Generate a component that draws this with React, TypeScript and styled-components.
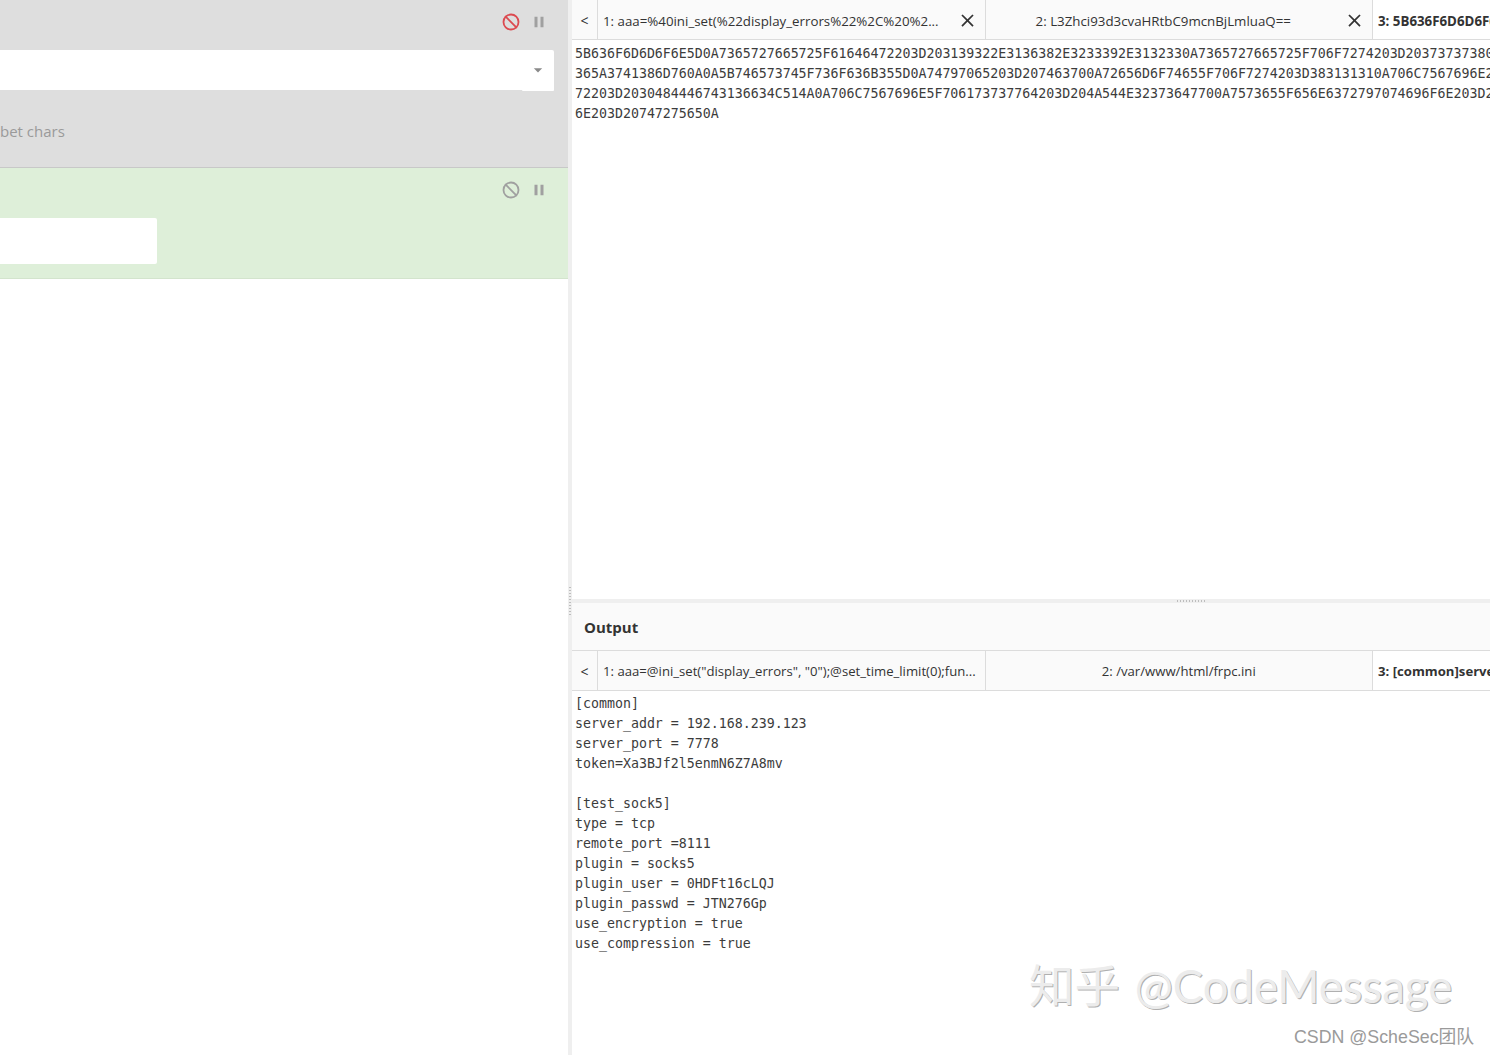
import React from "react";
import styled, { createGlobalStyle } from "styled-components";
import { Ban } from "lucide-react";
import { MdClose, MdPause, MdArrowDropDown } from "react-icons/md";

const outputText = `[common]
server_addr = 192.168.239.123
server_port = 7778
token=Xa3BJf2l5enmN6Z7A8mv

[test_sock5]
type = tcp
remote_port =8111
plugin = socks5
plugin_user = 0HDFt16cLQJ
plugin_passwd = JTN276Gp
use_encryption = true
use_compression = true
`;

const toHex = (text: string) =>
  Array.from(text)
    .map((c) => c.charCodeAt(0).toString(16).toUpperCase().padStart(2, "0"))
    .join("");

const hexLines = toHex(outputText).match(/.{1,154}/g)!.join("\n");

const App = () => {
  return (
    <>
      <GlobalStyle />
      <Page>
        <RecipePanel>
          <Operation $tone="disabled">
            <OperationControls>
              <ControlIcon $active><Ban size={18} strokeWidth={2.4} /></ControlIcon>
              <ControlIcon><MdPause /></ControlIcon>
            </OperationControls>
            <SelectField>
              <MdArrowDropDown />
            </SelectField>
            <CheckboxLabel>bet chars</CheckboxLabel>
          </Operation>
          <Operation $tone="flow">
            <OperationControls>
              <ControlIcon><Ban size={18} strokeWidth={2.4} /></ControlIcon>
              <ControlIcon><MdPause /></ControlIcon>
            </OperationControls>
            <TextField />
          </Operation>
        </RecipePanel>
        <VerticalGutter />
        <IoPanel>
          <InputArea>
            <InputTabBar>
              <TabArrow>&lt;</TabArrow>
              <Tab>
                <TabTitle>1: aaa=%40ini_set(%22display_errors%22%2C%20%2...</TabTitle>
                <CloseButton><MdClose /></CloseButton>
              </Tab>
              <Tab>
                <TabTitle $centered>2: L3Zhci93d3cvaHRtbC9mcnBjLmluaQ==</TabTitle>
                <CloseButton><MdClose /></CloseButton>
              </Tab>
              <Tab $active>
                <TabTitle>3: 5B636F6D6D6F6E5D0A7365727665725F61646472...</TabTitle>
              </Tab>
            </InputTabBar>
            <InputText>{hexLines}</InputText>
          </InputArea>
          <HorizontalGutter />
          <OutputHeader>Output</OutputHeader>
          <TabBar>
            <TabArrow>&lt;</TabArrow>
            <Tab>
              <TabTitle>1: aaa=@ini_set("display_errors", "0");@set_time_limit(0);fun...</TabTitle>
            </Tab>
            <Tab>
              <TabTitle $centered>2: /var/www/html/frpc.ini</TabTitle>
            </Tab>
            <Tab $active>
              <TabTitle>3: [common]server_addr = 192.168.239.123...</TabTitle>
            </Tab>
          </TabBar>
          <CodeText>{outputText}</CodeText>
        </IoPanel>
        <Watermark>知乎 @CodeMessage</Watermark>
        <SourceMark>CSDN @ScheSec团队</SourceMark>
      </Page>
    </>
  );
};

export default App;

const GlobalStyle = createGlobalStyle`
  html, body {
    margin: 0;
    overflow: hidden;
    background: #fff;
  }
`;

const Page = styled.div`
  position: relative;
  display: flex;
  width: 1490px;
  height: 1055px;
  overflow: hidden;
  font-family: "Open Sans", "Liberation Sans", sans-serif;
  color: #333;
`;

const RecipePanel = styled.div`
  width: 568px;
  flex: none;
  background: #fff;
`;

const Operation = styled.div<{ $tone: "disabled" | "flow" }>`
  position: relative;
  box-sizing: border-box;
  height: ${(props) => (props.$tone === "disabled" ? "168px" : "111px")};
  padding-top: 50px;
  background: ${(props) => (props.$tone === "disabled" ? "#dedede" : "#deefd9")};
  border-bottom: 1px solid ${(props) => (props.$tone === "disabled" ? "#c8c8c8" : "#d3e4cd")};
`;

const OperationControls = styled.div`
  position: absolute;
  top: 13px;
  right: 20px;
  display: flex;
  align-items: center;
  gap: 10px;
  height: 18px;
`;

const ControlIcon = styled.span<{ $active?: boolean }>`
  display: flex;
  font-size: 18px;
  color: ${(props) => (props.$active ? "#dc4a50" : "#a0a0a0")};
`;

const SelectField = styled.div`
  position: relative;
  box-sizing: border-box;
  width: 554px;
  height: 40px;
  padding-right: 6px;
  display: flex;
  align-items: center;
  justify-content: flex-end;
  background: #fff;
  border-radius: 0 2px 0 0;
  font-size: 20px;
  color: #8a8a8a;

  &::after {
    content: "";
    position: absolute;
    top: 100%;
    right: 0;
    width: 32px;
    height: 1px;
    background: #fff;
    border-radius: 0 0 2px 2px;
  }
`;

const CheckboxLabel = styled.div`
  margin-top: 31px;
  font-size: 15px;
  line-height: 20px;
  color: #9a9a9a;
`;

const TextField = styled.div`
  width: 157px;
  height: 46px;
  background: #fff;
  border-radius: 0 2px 2px 0;
`;

const VerticalGutter = styled.div`
  position: relative;
  width: 4px;
  flex: none;
  background: #efefef;

  &::after {
    content: "";
    position: absolute;
    top: 587px;
    left: 1px;
    width: 2px;
    height: 28px;
    background: repeating-linear-gradient(180deg, #bdbdbd 0 1px, transparent 1px 3px);
  }
`;

const IoPanel = styled.div`
  display: flex;
  flex-direction: column;
  flex: 1;
  min-width: 0;
`;

const InputArea = styled.div`
  height: 599px;
  flex: none;
`;

const TabBar = styled.div`
  display: flex;
  box-sizing: border-box;
  height: 40px;
  flex: none;
  font-size: 13.15px;
  background: #fafafa;
  border-bottom: 1px solid #dcdcdc;
`;

const InputTabBar = styled(TabBar)`
  font-size: 13.3px;

  && > * {
    padding-top: 2px;
  }
`;

const TabArrow = styled.div`
  box-sizing: border-box;
  width: 26px;
  flex: none;
  display: flex;
  align-items: center;
  justify-content: center;
  padding-top: 2px;
  font-size: 14px;
  border-right: 1px solid #dcdcdc;
`;

const Tab = styled.div<{ $active?: boolean }>`
  box-sizing: border-box;
  width: 387.5px;
  flex: none;
  display: flex;
  align-items: center;
  padding: 0 5px;
  white-space: nowrap;
  overflow: hidden;
  font-weight: ${(props) => (props.$active ? 700 : 400)};
  background: ${(props) => (props.$active ? "#fff" : "transparent")};
  border-right: 1px solid #dcdcdc;
`;

const TabTitle = styled.span<{ $centered?: boolean }>`
  flex: 1;
  min-width: 0;
  text-align: ${(props) => (props.$centered ? "center" : "left")};
`;

const CloseButton = styled.span`
  display: flex;
  margin: 0 2px 0 8px;
  font-size: 21px;
  color: #333;
`;

const CodeText = styled.div`
  padding: 3px 0 0 3px;
  font-family: "DejaVu Sans Mono", monospace;
  font-size: 13.28px;
  line-height: 20px;
  color: #3c3c3c;
  white-space: pre;
`;

const InputText = styled(CodeText)`
  padding-top: 4px;
`;

const HorizontalGutter = styled.div`
  position: relative;
  height: 4px;
  flex: none;
  background: #efefef;

  &::after {
    content: "";
    position: absolute;
    top: 1px;
    left: 605px;
    width: 30px;
    height: 2px;
    background: repeating-linear-gradient(90deg, #bdbdbd 0 1px, transparent 1px 3px);
  }
`;

const OutputHeader = styled.div`
  box-sizing: border-box;
  height: 48px;
  flex: none;
  padding: 1px 0 0 12px;
  display: flex;
  align-items: center;
  font-size: 15px;
  font-weight: 700;
  background: #fafafa;
  border-bottom: 1px solid #dcdcdc;
`;

const Watermark = styled.div`
  position: absolute;
  left: 1029px;
  top: 957px;
  font-family: "Lato", "Noto Sans CJK SC", sans-serif;
  font-size: 45.5px;
  line-height: 58px;
  word-spacing: 3px;
  white-space: nowrap;
  color: #ececec;
  text-shadow: 1px 1px 0 #b0b0b0;
`;

const SourceMark = styled.div`
  position: absolute;
  left: 1294px;
  top: 1025px;
  font-family: "Liberation Sans", "Noto Sans CJK SC", sans-serif;
  font-size: 17.8px;
  line-height: 24px;
  white-space: nowrap;
  color: #9a9a9a;
`;
